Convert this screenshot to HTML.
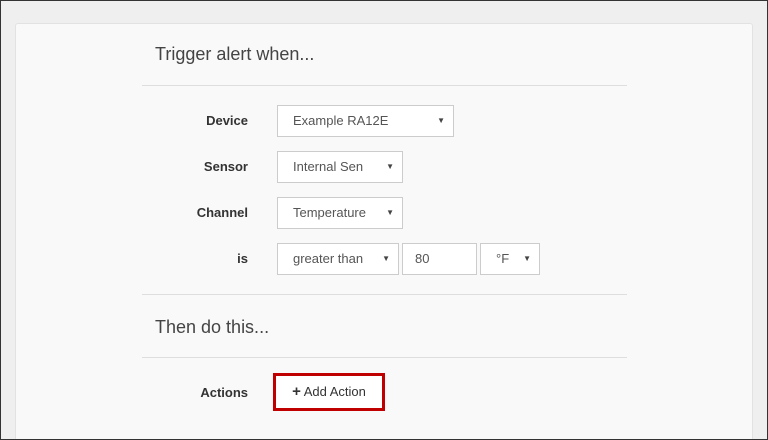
<!DOCTYPE html>
<html><head><style>
*{box-sizing:border-box;margin:0;padding:0}
html,body{width:768px;height:440px;overflow:hidden}
body{background:#efefef;font-family:"Liberation Sans",sans-serif;position:relative}
.frame{position:absolute;left:0;top:0;width:768px;height:440px;border:1px solid #333;z-index:5;pointer-events:none}
.card{position:absolute;left:15px;top:23px;width:738px;height:430px;background:#f9f9f9;border:1px solid #e2e2e2;border-radius:3px}
.abs{position:absolute}
h2{position:absolute;font-weight:normal;font-size:18px;color:#444}
.hr{position:absolute;left:142px;width:485px;height:1px;background:#dedede}
.lbl{position:absolute;font-weight:bold;font-size:13px;color:#333;text-align:right;width:100px}
.sel{position:absolute;height:32px;background:#fff;border:1px solid #ccc;font-size:13px;color:#555;padding-left:15px;line-height:30px}
.sel .ar{position:absolute;right:8px;top:0;font-size:8px;color:#444}
</style></head><body>
<div class="frame"></div>
<div class="card"></div>
<h2 style="left:155px;top:44px">Trigger alert when...</h2>
<div class="hr" style="top:85px"></div>
<div class="lbl" style="left:148px;top:113px">Device</div>
<div class="sel" style="left:277px;top:105px;width:177px">Example RA12E<span class="ar">▼</span></div>
<div class="lbl" style="left:148px;top:159px">Sensor</div>
<div class="sel" style="left:277px;top:151px;width:126px">Internal Sen<span class="ar">▼</span></div>
<div class="lbl" style="left:148px;top:205px">Channel</div>
<div class="sel" style="left:277px;top:197px;width:126px">Temperature<span class="ar">▼</span></div>
<div class="lbl" style="left:148px;top:251px">is</div>
<div class="sel" style="left:277px;top:243px;width:122px">greater than<span class="ar">▼</span></div>
<div class="sel" style="left:402px;top:243px;width:75px;padding-left:12px">80</div>
<div class="sel" style="left:480px;top:243px;width:60px">°F<span class="ar">▼</span></div>
<div class="hr" style="top:294px"></div>
<h2 style="left:155px;top:317px">Then do this...</h2>
<div class="hr" style="top:357px"></div>
<div class="lbl" style="left:148px;top:385px">Actions</div>
<div class="abs" style="left:273px;top:373px;width:112px;height:38px;border:3px solid #c00000;background:#fff;font-size:13px;color:#333;line-height:32px;text-align:center"><b style="font-size:15px">+</b> Add Action</div>
</body></html>
